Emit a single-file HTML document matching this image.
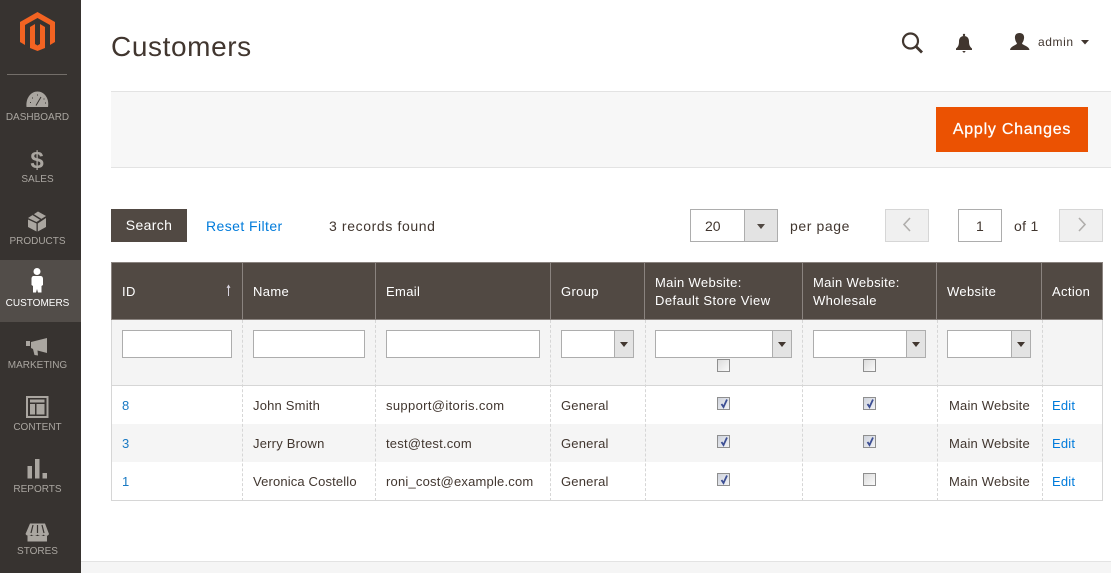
<!DOCTYPE html>
<html><head><meta charset="utf-8"><title>Customers</title>
<style>
*{box-sizing:border-box}
html,body{margin:0;padding:0;width:1111px;height:573px;overflow:hidden;background:#fff;font-family:"Liberation Sans",sans-serif;color:#41362f}
.a{position:absolute;white-space:nowrap}
.t{position:absolute;white-space:nowrap;font-size:13px;line-height:16px;letter-spacing:.2px;color:#41362f;margin-top:1px}
.h{position:absolute;white-space:nowrap;font-size:13px;line-height:18px;letter-spacing:.35px;color:#fff;margin-top:1px}
.l{color:#1979c3}
.n{position:absolute;left:0;width:75px;text-align:center;font-size:10px;line-height:12px;letter-spacing:0;color:#aaa6a0;margin-top:1px}
.b{position:absolute}
.inp{position:absolute;background:#fff;border:1px solid #adadad;height:28px;top:330px}
.sel{position:absolute;background:#fff;border:1px solid #adadad;height:28px;top:330px}
.sel i{position:absolute;right:0;top:0;bottom:0;width:19px;background:#e3e3e3;border-left:1px solid #adadad}
.sel i:after{content:"";position:absolute;left:5px;top:11px;border-left:4px solid transparent;border-right:4px solid transparent;border-top:5px solid #41362f}
.cb{position:absolute;width:13px;height:13px;border:1px solid #8f8f8f;background:linear-gradient(135deg,#dcdcdc,#fafafa)}
.cb.c{background:linear-gradient(135deg,#cfd3dc,#f2f3f6)}
.cb svg{position:absolute;left:1px;top:0}
.v{position:absolute;width:0;border-left:1px dashed #d6d6d6}
</style></head><body>

<!-- sidebar -->
<div class="b" style="left:0;top:0;width:81px;height:573px;background:#373330"></div>
<div class="b" style="left:0;top:260px;width:81px;height:62px;background:#524d49"></div>
<div class="b" style="left:7px;top:74px;width:60px;height:1px;background:#736e69"></div>
<svg class="b" style="left:0;top:0" width="81" height="573" viewBox="0 0 81 573">
<path fill="#f26322" d="M37.500 12L55 22V42L50 45V25L37.500 18L25 25V45L20 42V22Z"/>
<path fill="#f26322" d="M30 27L35 24V44L37.500 45.500L40 44V24L45 27V48L37.500 51L30 48Z"/>
<path fill="#aaa6a0" d="M26.500 107C25.500 98 31 91.500 37.500 91.500S49.500 98 48 107Z"/>
<path stroke="#373330" stroke-width="1" fill="none" d="M36 105.500L41 97M30 102.500h1M32 98h1M37 95h1M43.500 99h1M45 103h1"/>
<text x="37" y="168" text-anchor="middle" font-family="Liberation Sans" font-weight="700" font-size="24" fill="#aaa6a0">$</text>
<g fill="#aaa6a0">
<path d="M28 218L38 211.500L46 216L36.500 222Z"/>
<path d="M28 219.500L36.500 223.500V231.500L28 227Z"/>
<path d="M37.800 223.500L46 218V227L37.800 231.500Z"/>
</g>
<path stroke="#373330" stroke-width="1.500" d="M33 214.500L41 219.500"/>
<circle cx="37" cy="271.500" r="3.500" fill="#fff"/>
<path fill="#fff" d="M33.500 276H40.500C42 276 43 277 43 279V285L41.500 286V292.500H38L37 289L36 292.500H33V286L31.500 285V279C31.500 277 32.500 276 33.500 276Z"/>
<g fill="#aaa6a0">
<path d="M26 341H30V346H26Z"/>
<path d="M31 342L47 338V353L37.500 350.500L38 355.500L34.500 355L33 349L31 348Z"/>
</g>
<path fill="none" stroke="#aaa6a0" stroke-width="2" d="M27 397H47.500V417H27Z"/>
<path fill="#aaa6a0" d="M30 399.500H44.500V402.500H30ZM30 404H35V414.500H30ZM36.500 404H44.500V414.500H36.500Z"/>
<path fill="#aaa6a0" d="M27.500 466H32V478.500H27.500ZM35 459H39.500V478.500H35ZM42.500 473H47V478.500H42.500Z"/>
<path fill="#aaa6a0" d="M30 523.500H45L49 534C48 536.500 44.500 536.500 43.500 534.500C42.500 536.500 39 536.500 37.500 534.500C36 536.500 32.500 536.500 31.500 534.500C30.500 536.500 27 536.500 25.500 534Z"/>
<path stroke="#373330" stroke-width="1.200" d="M33 525L31 533M37.500 525V533M42 525L44 533"/>
<path fill="#aaa6a0" d="M27.500 536H47V541.500H27.500Z"/>
</svg>
<div class="n" style="top:111px">DASHBOARD</div>
<div class="n" style="top:173px">SALES</div>
<div class="n" style="top:235px">PRODUCTS</div>
<div class="n" style="top:297px;color:#fff">CUSTOMERS</div>
<div class="n" style="top:359px">MARKETING</div>
<div class="n" style="top:421px">CONTENT</div>
<div class="n" style="top:483px">REPORTS</div>
<div class="n" style="top:545px">STORES</div>

<!-- header -->
<div class="a" style="left:111px;top:30px;font-size:28px;line-height:34px;letter-spacing:.6px;color:#41362f">Customers</div>
<svg class="b" style="left:900px;top:30px" width="190" height="26" viewBox="900 30 190 26">
<circle cx="910.500" cy="41" r="7.500" fill="none" stroke="#41362f" stroke-width="2.200"/>
<path d="M916 46.500L922 52.500" stroke="#41362f" stroke-width="2.800"/>
<path fill="#41362f" d="M964 36C967.500 36 969 38.500 969 41.500C969 45 970 47 972 48.500V50H956V48.500C958 47 959 45 959 41.500C959 38.500 960.500 36 964 36Z"/>
<path fill="#41362f" d="M962.200 51H965.800L964 53Z"/>
<circle cx="964" cy="35" r="1.200" fill="#41362f"/>
<path fill="#41362f" d="M1019.500 33C1023 33 1024.500 35.500 1024 38.500C1023.700 41 1022.500 42.500 1022 43.500C1023 45.500 1029 46 1029.500 50H1010C1010.500 46 1016 45.500 1017 43.500C1016.500 42.500 1015.300 41 1015 38.500C1014.500 35.500 1016 33 1019.500 33Z"/>
<path fill="#41362f" d="M1081 40H1089L1085 44.500Z"/>
</svg>
<div class="a" style="left:1038px;top:34px;font-size:12px;line-height:16px;letter-spacing:.6px;color:#41362f">admin</div>

<!-- action bar -->
<div class="b" style="left:111px;top:91px;width:1000px;height:77px;background:#f7f7f7;border-top:1px solid #e3e3e3;border-bottom:1px solid #e3e3e3"></div>
<div class="a" style="left:936px;top:107px;width:152px;height:45px;background:#eb5202;color:#fff;font-size:16px;font-weight:400;line-height:45px;text-align:center;letter-spacing:.75px;-webkit-text-stroke:.25px #fff">Apply Changes</div>

<!-- toolbar -->
<div class="a" style="left:111px;top:209px;width:76px;height:33px;background:#514943;color:#fff;font-size:14px;line-height:33px;text-align:center;letter-spacing:.35px">Search</div>
<div class="a l" style="left:206px;top:217px;font-size:14px;line-height:18px;letter-spacing:.42px;color:#007bdb">Reset Filter</div>
<div class="a" style="left:329px;top:217px;font-size:14px;line-height:18px;letter-spacing:.62px">3 records found</div>

<div class="b" style="left:690px;top:209px;width:88px;height:33px;background:#fff;border:1px solid #adadad"></div>
<div class="b" style="left:744px;top:209px;width:34px;height:33px;background:#e3e3e3;border:1px solid #adadad"></div>
<div class="b" style="left:757px;top:224px;border-left:4px solid transparent;border-right:4px solid transparent;border-top:5px solid #514943"></div>
<div class="a" style="left:705px;top:217px;font-size:14px;line-height:18px">20</div>
<div class="a" style="left:790px;top:217px;font-size:14px;line-height:18px;letter-spacing:.6px">per page</div>

<div class="b" style="left:885px;top:209px;width:44px;height:33px;background:#f0f0f0;border:1px solid #d6d6d6"></div>
<svg class="b" style="left:885px;top:209px" width="44" height="33"><path d="M25 9L19 15.500L25 22" fill="none" stroke="#b0aeac" stroke-width="1.600"/></svg>
<div class="b" style="left:958px;top:209px;width:44px;height:33px;background:#fff;border:1px solid #adadad"></div>
<div class="a" style="left:976px;top:217px;font-size:14px;line-height:18px">1</div>
<div class="a" style="left:1014px;top:217px;font-size:14px;line-height:18px;letter-spacing:.3px">of 1</div>
<div class="b" style="left:1059px;top:209px;width:44px;height:33px;background:#f0f0f0;border:1px solid #d6d6d6"></div>
<svg class="b" style="left:1059px;top:209px" width="44" height="33"><path d="M20 9L26 15.500L20 22" fill="none" stroke="#b0aeac" stroke-width="1.600"/></svg>

<!-- table -->
<div class="b" style="left:111px;top:262px;width:992px;height:58px;background:#514943;border:1px solid #8a837f;border-bottom-color:#8a837f"></div>
<div class="b" style="left:242px;top:262px;width:1px;height:58px;background:#8a837f"></div>
<div class="b" style="left:375px;top:262px;width:1px;height:58px;background:#8a837f"></div>
<div class="b" style="left:550px;top:262px;width:1px;height:58px;background:#8a837f"></div>
<div class="b" style="left:644px;top:262px;width:1px;height:58px;background:#8a837f"></div>
<div class="b" style="left:802px;top:262px;width:1px;height:58px;background:#8a837f"></div>
<div class="b" style="left:936px;top:262px;width:1px;height:58px;background:#8a837f"></div>
<div class="b" style="left:1041px;top:262px;width:1px;height:58px;background:#8a837f"></div>

<div class="h" style="left:122px;top:282px">ID</div>
<svg class="b" style="left:225px;top:284px" width="8" height="13"><path d="M3.500 12V1.500M2 4L3.500 1.500L5 4" fill="none" stroke="#d8d4e0" stroke-width="1"/></svg>
<div class="h" style="left:253px;top:282px">Name</div>
<div class="h" style="left:386px;top:282px">Email</div>
<div class="h" style="left:561px;top:282px">Group</div>
<div class="h" style="left:655px;top:273px">Main Website:</div>
<div class="h" style="left:655px;top:291px;letter-spacing:.45px">Default Store View</div>
<div class="h" style="left:813px;top:273px">Main Website:</div>
<div class="h" style="left:813px;top:291px">Wholesale</div>
<div class="h" style="left:947px;top:282px">Website</div>
<div class="h" style="left:1052px;top:282px">Action</div>

<!-- filter row -->
<div class="b" style="left:111px;top:320px;width:992px;height:66px;background:#f4f4f4;border-left:1px solid #d6d6d6;border-right:1px solid #d6d6d6;border-bottom:1px solid #d6d6d6"></div>
<!-- striped row -->
<div class="b" style="left:112px;top:424px;width:990px;height:38px;background:#f5f5f5"></div>
<!-- outer body -->
<div class="b" style="left:111px;top:386px;width:1px;height:115px;background:#d6d6d6"></div>
<div class="b" style="left:1102px;top:386px;width:1px;height:115px;background:#d6d6d6"></div>
<div class="b" style="left:111px;top:500px;width:992px;height:1px;background:#d6d6d6"></div>

<div class="v" style="left:242px;top:320px;height:181px"></div>
<div class="v" style="left:375px;top:320px;height:181px"></div>
<div class="v" style="left:550px;top:320px;height:181px"></div>
<div class="v" style="left:645px;top:320px;height:181px"></div>
<div class="v" style="left:802px;top:320px;height:181px"></div>
<div class="v" style="left:937px;top:320px;height:181px"></div>
<div class="v" style="left:1042px;top:320px;height:181px"></div>

<div class="inp" style="left:122px;width:110px"></div>
<div class="inp" style="left:253px;width:112px"></div>
<div class="inp" style="left:386px;width:154px"></div>
<div class="sel" style="left:561px;width:73px"><i></i></div>
<div class="sel" style="left:655px;width:137px"><i></i></div>
<div class="sel" style="left:813px;width:113px"><i></i></div>
<div class="sel" style="left:947px;width:84px"><i></i></div>
<div class="cb" style="left:717px;top:359px"></div>
<div class="cb" style="left:863px;top:359px"></div>

<!-- rows -->
<div class="t l" style="left:122px;top:397px">8</div>
<div class="t" style="left:253px;top:397px">John Smith</div>
<div class="t" style="left:386px;top:397px;letter-spacing:.35px">support@itoris.com</div>
<div class="t" style="left:561px;top:397px">General</div>
<div class="t" style="left:949px;top:397px">Main Website</div>
<div class="t" style="left:1052px;top:397px;color:#007bdb">Edit</div>

<div class="t l" style="left:122px;top:435px">3</div>
<div class="t" style="left:253px;top:435px">Jerry Brown</div>
<div class="t" style="left:386px;top:435px">test@test.com</div>
<div class="t" style="left:561px;top:435px">General</div>
<div class="t" style="left:949px;top:435px">Main Website</div>
<div class="t" style="left:1052px;top:435px;color:#007bdb">Edit</div>

<div class="t l" style="left:122px;top:473px">1</div>
<div class="t" style="left:253px;top:473px;letter-spacing:.15px">Veronica Costello</div>
<div class="t" style="left:386px;top:473px">roni_cost@example.com</div>
<div class="t" style="left:561px;top:473px">General</div>
<div class="t" style="left:949px;top:473px">Main Website</div>
<div class="t" style="left:1052px;top:473px;color:#007bdb">Edit</div>

<div class="cb c" style="left:717px;top:397px"><svg width="11" height="11"><path d="M2.500 6L4.500 9L8 1.500" fill="none" stroke="#3d4f94" stroke-width="1.800"/></svg></div>
<div class="cb c" style="left:863px;top:397px"><svg width="11" height="11"><path d="M2.500 6L4.500 9L8 1.500" fill="none" stroke="#3d4f94" stroke-width="1.800"/></svg></div>
<div class="cb c" style="left:717px;top:435px"><svg width="11" height="11"><path d="M2.500 6L4.500 9L8 1.500" fill="none" stroke="#3d4f94" stroke-width="1.800"/></svg></div>
<div class="cb c" style="left:863px;top:435px"><svg width="11" height="11"><path d="M2.500 6L4.500 9L8 1.500" fill="none" stroke="#3d4f94" stroke-width="1.800"/></svg></div>
<div class="cb c" style="left:717px;top:473px"><svg width="11" height="11"><path d="M2.500 6L4.500 9L8 1.500" fill="none" stroke="#3d4f94" stroke-width="1.800"/></svg></div>
<div class="cb" style="left:863px;top:473px"></div>

<!-- footer -->
<div class="b" style="left:81px;top:561px;width:1030px;height:12px;background:#f5f5f5;border-top:1px solid #e3e3e3"></div>
</body></html>
